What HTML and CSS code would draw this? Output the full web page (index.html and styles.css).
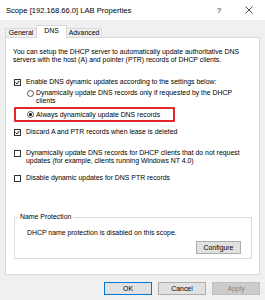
FILE: index.html
```html
<!DOCTYPE html>
<html>
<head>
<meta charset="utf-8">
<link rel="stylesheet" href="styles.css">
</head>
<body>
<div class="titlebar">
  <span class="title">Scope [192.168.66.0] LAB Properties</span>
  <span class="help">?</span>
  <span class="close"><svg width="8" height="8" viewBox="0 0 8 8"><path d="M0.5 0.5 L7.5 7.5 M7.5 0.5 L0.5 7.5" stroke="#222" stroke-width="0.8" fill="none"/></svg></span>
</div>
<div class="tabs">
  <div class="tab tab-general">General</div>
  <div class="tab tab-dns active">DNS</div>
  <div class="tab tab-adv">Advanced</div>
</div>
<div class="panel">
  <p class="intro">You can setup the DHCP server to automatically update authoritative DNS<br>servers with the host (A) and pointer (PTR) records of DHCP clients.</p>
  <div class="row check-row first-check">
    <span class="cb checked"><svg width="5" height="5" viewBox="0 0 5 5"><path d="M0.6 2.5 L1.9 3.9 L4.4 0.9" stroke="#000" stroke-width="1" fill="none"/></svg></span>
    <span class="label">Enable DNS dynamic updates according to the settings below:</span>
  </div>
  <div class="row radio-row opt1">
    <span class="rb"></span>
    <span class="label">Dynamically update DNS records only if requested by the DHCP<br>clients</span>
  </div>
  <div class="row radio-row highlight">
    <span class="rb selected"><span class="dot"></span></span>
    <span class="label">Always dynamically update DNS records</span>
  </div>
  <div class="row check-row discard">
    <span class="cb checked"><svg width="5" height="5" viewBox="0 0 5 5"><path d="M0.6 2.5 L1.9 3.9 L4.4 0.9" stroke="#000" stroke-width="1" fill="none"/></svg></span>
    <span class="label">Discard A and PTR records when lease is deleted</span>
  </div>
  <div class="row check-row dynupd">
    <span class="cb"></span>
    <span class="label">Dynamically update DNS records for DHCP clients that do not request<br>updates (for example, clients running Windows NT 4.0)</span>
  </div>
  <div class="row check-row disable">
    <span class="cb"></span>
    <span class="label">Disable dynamic updates for DNS PTR records</span>
  </div>
  <fieldset class="group">
    <legend>Name Protection</legend>
    <div class="group-text">DHCP name protection is disabled on this scope.</div>
    <div class="group-actions"><button class="btn configure">Configure</button></div>
  </fieldset>
</div>
<div class="buttons">
  <button class="btn default">OK</button>
  <button class="btn">Cancel</button>
  <button class="btn disabled">Apply</button>
</div>
</body>
</html>
```
FILE: styles.css
```css
* { box-sizing: border-box; }
html, body { margin: 0; padding: 0; }
body {
  width: 265px;
  height: 300px;
  overflow: hidden;
  background: #f0f0f0;
  font-family: "Liberation Sans", Arial, sans-serif;
  font-size: 6.9px;
  color: #000;
}
.titlebar {
  height: 20px;
  background: #fff;
  display: flex;
  align-items: center;
  padding-left: 6px;
  padding-right: 9px;
}
.title { flex: 1; font-size: 7.6px; white-space: nowrap; }
.help { width: 10px; text-align: center; font-size: 8px; color: #222; }
.close { width: 14px; margin-left: 18px; display: flex; justify-content: center; }
.close svg { display: block; }

.tabs {
  display: flex;
  align-items: flex-end;
  padding-left: 5px;
  margin-top: 5px;
  height: 12px;
}
.tab {
  height: 9px;
  border: 1px solid #d9d9d9;
  border-bottom: none;
  background: #f0f0f0;
  display: flex;
  align-items: center;
  justify-content: center;
  white-space: nowrap;
  line-height: 8px;
}
.tab-general { width: 32px; }
.tab-dns { width: 31px; margin-left: -1px; }
.tab-adv { width: 36px; margin-left: -1px; }
.tab.active {
  height: 13px;
  margin-bottom: -1px;
  background: #fff;
  position: relative;
  z-index: 1;
  padding-bottom: 2px;
}

.panel {
  margin: 0 5px;
  height: 238px;
  border: 1px solid #d9d9d9;
  background: #fff;
  padding: 10px 7px 0 7px;
}
.intro {
  margin: 0;
  line-height: 7.5px;
  white-space: nowrap;
}
.row {
  display: flex;
  align-items: flex-start;
  line-height: 8px;
  white-space: nowrap;
}
.check-row { margin-left: 1px; }
.cb {
  width: 7px;
  height: 7px;
  margin-top: 0.5px;
  border: 1px solid #333;
  background: #fff;
  display: flex;
  align-items: center;
  justify-content: center;
  flex: none;
  margin-right: 5px;
}
.cb svg { display: block; }
.rb {
  width: 7px;
  height: 7px;
  margin-top: 0.5px;
  border: 1px solid #555;
  border-radius: 50%;
  background: #fff;
  flex: none;
  margin-right: 2px;
  display: flex;
  align-items: center;
  justify-content: center;
}
.rb .dot { width: 3px; height: 3px; border-radius: 50%; background: #000; }
.first-check { margin-top: 15px; }
.opt1 { margin-top: 3px; margin-left: 14px; }
.highlight {
  margin-top: 2px;
  margin-left: 1px;
  width: 161px;
  height: 15px;
  border: 2px solid #e3262b;
  border-radius: 1px;
  padding-left: 11px;
  align-items: center;
}
.highlight .rb { margin-top: 0; }
.discard { margin-top: 6px; }
.dynupd { margin-top: 13px; }
.disable { margin-top: 9px; }

.group {
  margin: 31px 0 0 1px;
  border: 1px solid #dcdcdc;
  padding: 8px 10px 4px 12px;
  min-inline-size: 0;
}
.group legend {
  margin-left: -9px;
  padding: 0 2px;
  line-height: 8px;
}
.group-text { line-height: 8px; white-space: nowrap; }
.group-actions { display: flex; justify-content: flex-end; margin-top: 4px; }

.btn {
  font-family: inherit;
  font-size: 6.9px;
  height: 13px;
  width: 48px;
  padding: 0;
  margin: 0;
  background: #e1e1e1;
  border: 1px solid #adadad;
  color: #000;
  line-height: 11px;
}
.configure { width: 45px; }
.buttons {
  display: flex;
  justify-content: flex-end;
  gap: 6px;
  padding-right: 5px;
  margin-top: 7px;
}
.btn.default { border: 1.5px solid #0078d7; }
.btn.disabled { background: #cccccc; border-color: #bfbfbf; color: #838383; }
```
